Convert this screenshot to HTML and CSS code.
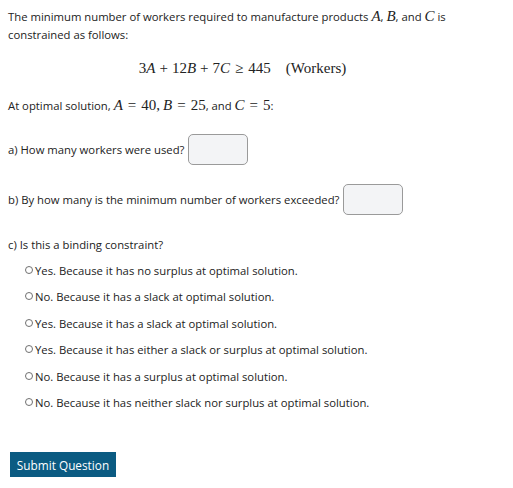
FILE: index.html
```html
<!DOCTYPE html>
<html>
<head>
<meta charset="utf-8">
<link rel="stylesheet" href="styles.css">
</head>
<body>
<div class="question">
  <p class="intro">The minimum number of workers required to manufacture products <span class="m"><i>A</i></span>, <span class="m"><i>B</i></span>, and <span class="m"><i>C</i></span> is constrained as follows:</p>
  <div class="equation"><span class="m">3<i>A</i><span class="op">+</span>12<i>B</i><span class="op">+</span>7<i>C</i><span class="rel">≥</span>445<span class="quad"></span>(Workers)</span></div>
  <p class="given">At optimal solution, <span class="m"><i>A</i><span class="rel">=</span>40,<span class="thin"></span><i>B</i><span class="rel">=</span>25</span>, and <span class="m"><i>C</i><span class="rel">=</span>5</span>:</p>
  <div class="row row-a">a) How many workers were used? <input class="answer" type="text"></div>
  <div class="row row-b">b) By how many is the minimum number of workers exceeded? <input class="answer" type="text"></div>
  <p class="part-c">c) Is this a binding constraint?</p>
  <ul class="options">
    <li><label><input type="radio" name="c">Yes. Because it has no surplus at optimal solution.</label></li>
    <li><label><input type="radio" name="c">No. Because it has a slack at optimal solution.</label></li>
    <li><label><input type="radio" name="c">Yes. Because it has a slack at optimal solution.</label></li>
    <li><label><input type="radio" name="c">Yes. Because it has either a slack or surplus at optimal solution.</label></li>
    <li><label><input type="radio" name="c">No. Because it has a surplus at optimal solution.</label></li>
    <li><label><input type="radio" name="c">No. Because it has neither slack nor surplus at optimal solution.</label></li>
  </ul>
  <button class="submit" type="button">Submit Question</button>
</div>
</body>
</html>
```

FILE: styles.css
```css
html, body {
  margin: 0;
  padding: 0;
  background: #ffffff;
}
body {
  padding: 8px 8px 0 8px;
  font-family: "Open Sans", "Noto Sans", sans-serif;
  font-size: 11.3px;
  line-height: 18px;
  color: #222222;
}
.question {
  width: 469px;
}
p {
  margin: 0;
}
.m {
  font-family: "Liberation Serif", "DejaVu Serif", serif;
  font-size: 15px;
  line-height: 1;
  white-space: nowrap;
}
.m i {
  font-style: italic;
}
.op {
  padding: 0 4px;
}
.rel {
  padding: 0 5px;
}
.thin {
  display: inline-block;
  width: 3px;
}
.quad {
  display: inline-block;
  width: 15px;
}
.equation {
  text-align: center;
  margin-top: 15px;
  line-height: 20px;
}
.given {
  margin-top: 18px;
}
.row {
  display: flex;
  align-items: center;
  white-space: pre;
}
.row-a {
  margin-top: 19px;
}
.row-b {
  margin-top: 19px;
}
.answer {
  width: 60px;
  height: 31px;
  box-sizing: border-box;
  margin: 0 0 0 1px;
  border: 1px solid #9a9a9a;
  border-radius: 5px;
  background: #f3f4f6;
  padding: 0 6px;
  font: inherit;
}
.part-c {
  margin-top: 21px;
}
.options {
  list-style: none;
  margin: 8px 0 0 0;
  padding: 0 0 0 17px;
}
.options li {
  height: 26.4px;
  line-height: 18px;
}
.options label {
  display: flex;
  align-items: center;
}
.options input[type="radio"] {
  appearance: none;
  -webkit-appearance: none;
  width: 8px;
  height: 8px;
  margin: 0 2px 0 0;
  position: relative;
  top: -1px;
  border: 1px solid #707070;
  border-radius: 50%;
  background: #fff;
  flex: none;
}
.submit {
  display: block;
  margin: 32px 0 0 2px;
  width: 106px;
  height: 25px;
  padding: 0;
  border: none;
  background: #0b5b82;
  color: #ffffff;
  font-family: "Open Sans", "Noto Sans", sans-serif;
  font-size: 11.8px;
}
```
